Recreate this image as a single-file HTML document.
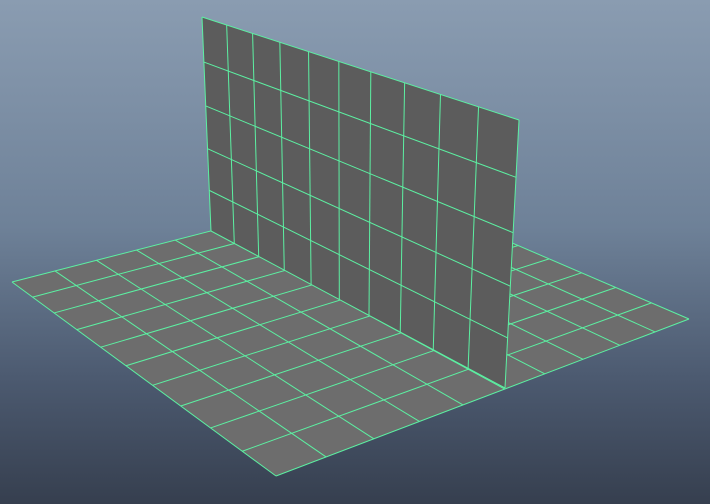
<!DOCTYPE html>
<html><head><meta charset="utf-8"><style>
html,body{margin:0;padding:0;width:710px;height:504px;overflow:hidden}
body{background:linear-gradient(#8a9cb1 0%,#6e8198 45%,#4c5a70 75%,#363f4f 100%)}
svg{position:absolute;left:0;top:0}
</style></head><body>
<svg id="s" width="710" height="504" viewBox="0 0 710 504"></svg>
<script>
function H(p){ // map unit square: (0,0)=p0,(1,0)=p1,(1,1)=p2,(0,1)=p3
 var x0=p[0][0],y0=p[0][1],x1=p[1][0],y1=p[1][1],x2=p[2][0],y2=p[2][1],x3=p[3][0],y3=p[3][1];
 var dx1=x1-x2,dx2=x3-x2,dy1=y1-y2,dy2=y3-y2,sx=x0-x1+x2-x3,sy=y0-y1+y2-y3;
 var den=dx1*dy2-dx2*dy1;
 var g=(sx*dy2-dx2*sy)/den,h=(dx1*sy-sx*dy1)/den;
 var a=x1-x0+g*x1,b=x3-x0+h*x3,c=x0,d=y1-y0+g*y1,e=y3-y0+h*y3,f=y0;
 return function(u,v){var w=g*u+h*v+1;return [(a*u+b*v+c)/w,(d*u+e*v+f)/w];};
}
var s='';
function quad(m,nu,nv,fill){
 var c=[m(0,0),m(1,0),m(1,1),m(0,1)];
 s+='<polygon points="'+c.map(function(p){return p.join(',')}).join(' ')+'" fill="'+fill+'"/>';
 var i,a,b;
 for(i=0;i<=nu;i++){a=m(i/nu,0);b=m(i/nu,1);s+='<line x1="'+a[0]+'" y1="'+a[1]+'" x2="'+b[0]+'" y2="'+b[1]+'"/>';}
 for(i=0;i<=nv;i++){a=m(0,i/nv);b=m(1,i/nv);s+='<line x1="'+a[0]+'" y1="'+a[1]+'" x2="'+b[0]+'" y2="'+b[1]+'"/>';}
}
var floor=H([[12,282],[276,476],[689,319],[382,187]]);
quad(floor,10,10,'#6d6d6d');
var wall=H([[211,231],[505,388],[519,120],[202,17]]);
quad(wall,10,5,'#5c5c5c');
document.getElementById('s').innerHTML='<g stroke="#5cf0a2" stroke-width="1" fill="none">'+'</g>';
document.getElementById('s').innerHTML=s.replace(/<line /g,'<line stroke="#5cf0a2" stroke-width="1" ');
</script>
</body></html>
